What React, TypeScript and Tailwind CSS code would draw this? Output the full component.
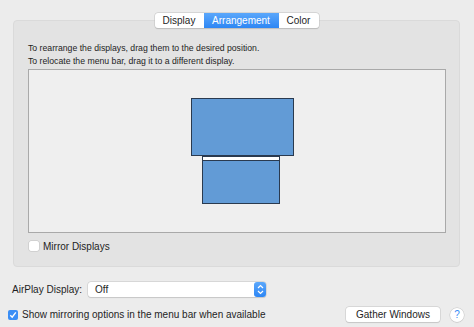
import React from "react";

export default function App() {
  const font = { fontFamily: '"Liberation Sans", Arial, sans-serif' };
  return (
    <div
      className="relative w-[474px] h-[327px] bg-[#ececec] text-[#1e1e1e] text-[10px] overflow-hidden"
      style={font}
    >
      <div className="flex flex-col pt-[13px]">
        {/* Tabs */}
        <div className="relative z-10 flex justify-center h-[15px] -mb-[8px] ml-[-1px]">
          <div className="flex h-[15px] rounded-[3px] bg-white shadow-[0_0_0_0.5px_#c4c4c4,0_0.5px_1px_rgba(0,0,0,0.2)] overflow-hidden leading-[15px]">
            <div className="w-[49px] text-center">Display</div>
            <div className="w-[75px] text-center text-white bg-gradient-to-b from-[#5aa7fb] to-[#2c86f4]">
              Arrangement
            </div>
            <div className="w-[40px] text-center">Color</div>
          </div>
        </div>
        {/* Group panel */}
        <div className="mx-[13px] w-[447px] h-[247px] bg-[#e3e3e3] rounded-[4px] border border-[#dadada] flex flex-col pt-[21px] pl-[14px] pr-[12px]">
          <div className="leading-[13px] text-[8.7px]">
            <div>To rearrange the displays, drag them to the desired position.</div>
            <div>To relocate the menu bar, drag it to a different display.</div>
          </div>
          <div className="relative mt-[1px] w-[418px] h-[164px] bg-[#efefef] border border-[#a9a9a9]">
            <div className="absolute left-[162px] top-[28px] w-[103px] h-[58px] bg-[#629bd6] border border-[#2a3a4f]" />
            <div className="absolute left-[173px] top-[86px] w-[78px] h-[48px] bg-[#629bd6] border border-[#2a3a4f] flex flex-col">
              <div className="h-[4px] bg-white border-b border-[#2a3a4f]" />
            </div>
          </div>
          <div className="flex items-center mt-[7px] h-[12px]">
            <div className="w-[10px] h-[10px] ml-[1px] bg-white rounded-[2px] shadow-[0_0_0_0.5px_#c0c0c0]" />
            <span className="ml-[4px]">Mirror Displays</span>
          </div>
        </div>
        {/* AirPlay row */}
        <div className="flex items-center h-[15px] mt-[15px] pl-[12px]">
          <span>AirPlay Display:</span>
          <div className="ml-[6px] w-[178px] h-[15px] bg-white rounded-[3px] shadow-[0_0_0_0.5px_#c6c6c6,0_0.5px_1px_rgba(0,0,0,0.15)] flex items-center justify-between">
            <span className="pl-[7px]">Off</span>
            <div className="w-[12px] h-[15px] rounded-[3px] bg-gradient-to-b from-[#5aa7fb] to-[#2c86f4] flex items-center justify-center">
              <svg width="7" height="11" viewBox="0 0 7 11">
                <path d="M1 4 L3.5 1.5 L6 4" fill="none" stroke="white" strokeWidth="1.2" />
                <path d="M1 7 L3.5 9.5 L6 7" fill="none" stroke="white" strokeWidth="1.2" />
              </svg>
            </div>
          </div>
        </div>
        {/* Bottom row */}
        <div className="flex items-center h-[15px] mt-[10px] pl-[8px]">
          <div className="w-[10px] h-[10px] rounded-[2px] bg-[#3a8ef5] flex items-center justify-center">
            <svg width="8" height="8" viewBox="0 0 8 8">
              <path d="M1.3 4.2 L3.2 6.2 L6.8 1.3" fill="none" stroke="white" strokeWidth="1.4" />
            </svg>
          </div>
          <span className="ml-[4px]">Show mirroring options in the menu bar when available</span>
          <div className="ml-auto w-[94px] h-[15px] bg-white rounded-[3px] shadow-[0_0_0_0.5px_#c6c6c6,0_0.5px_1px_rgba(0,0,0,0.15)] flex items-center justify-center">
            Gather Windows
          </div>
          <div className="ml-[10px] mr-[10px] w-[14px] h-[14px] rounded-full bg-white shadow-[0_0_0_0.5px_#c6c6c6,0_0.5px_1px_rgba(0,0,0,0.15)] flex items-center justify-center text-[#3a8ef5] text-[10px]">
            ?
          </div>
        </div>
      </div>
    </div>
  );
}
